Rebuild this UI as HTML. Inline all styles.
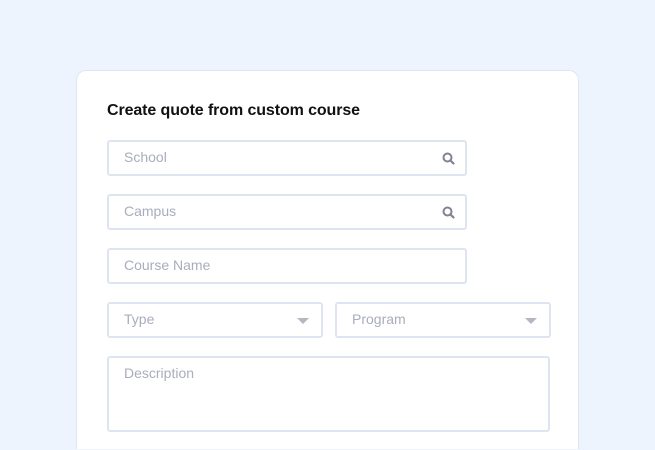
<!DOCTYPE html>
<html><head><style>
html,body{margin:0;width:655px;height:450px;overflow:hidden}
body{background:#eef4fe;font-family:"Liberation Sans",sans-serif;position:relative}
.card{position:absolute;left:76px;top:70px;width:501px;height:378px;background:#fff;border:1px solid #dfe6f2;border-bottom:none;border-radius:10px 10px 0 0}
h1{position:absolute;left:107px;top:102px;margin:0;font-size:16px;font-weight:bold;color:#111;letter-spacing:-0.1px}
.f{position:absolute;box-sizing:border-box;border:2px solid #dfe5f0;border-radius:3px;background:#fff;color:#a9adbc;font-size:14px;padding-left:15px;line-height:31px}
.ic{position:absolute;right:10px;top:10px}
.tri{position:absolute;right:12px;top:14px;width:0;height:0;border-left:6px solid transparent;border-right:6px solid transparent;border-top:6px solid #b3b7c2}
</style></head><body>
<div class="card"></div>
<h1>Create quote from custom course</h1>
<div class="f" style="left:107px;top:140px;width:360px;height:36px">School<svg class="ic" width="13" height="13" viewBox="0 0 13 13"><circle cx="5.5" cy="5.5" r="4" fill="none" stroke="#80848f" stroke-width="2"/><path d="M8.5 8.5L11.5 11.5" stroke="#80848f" stroke-width="2.2" stroke-linecap="round"/></svg></div>
<div class="f" style="left:107px;top:194px;width:360px;height:36px">Campus<svg class="ic" width="13" height="13" viewBox="0 0 13 13"><circle cx="5.5" cy="5.5" r="4" fill="none" stroke="#80848f" stroke-width="2"/><path d="M8.5 8.5L11.5 11.5" stroke="#80848f" stroke-width="2.2" stroke-linecap="round"/></svg></div>
<div class="f" style="left:107px;top:248px;width:360px;height:36px">Course Name</div>
<div class="f" style="left:107px;top:302px;width:216px;height:36px">Type<div class="tri"></div></div>
<div class="f" style="left:335px;top:302px;width:216px;height:36px">Program<div class="tri"></div></div>
<div class="f" style="left:107px;top:356px;width:443px;height:76px">Description</div>
</body></html>
